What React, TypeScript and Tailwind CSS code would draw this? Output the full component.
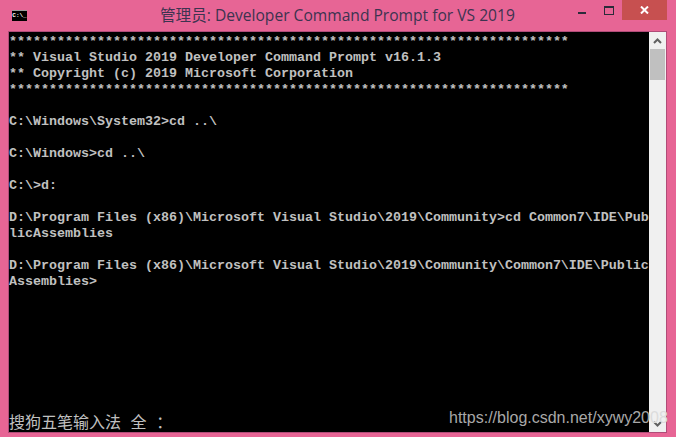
import React from 'react'

const stars = '*'.repeat(70)

const lines = [
  stars,
  '** Visual Studio 2019 Developer Command Prompt v16.1.3',
  '** Copyright (c) 2019 Microsoft Corporation',
  stars,
  '',
  'C:\\Windows\\System32>cd ..\\',
  '',
  'C:\\Windows>cd ..\\',
  '',
  'C:\\>d:',
  '',
  'D:\\Program Files (x86)\\Microsoft Visual Studio\\2019\\Community>cd Common7\\IDE\\Pub',
  'licAssemblies',
  '',
  'D:\\Program Files (x86)\\Microsoft Visual Studio\\2019\\Community\\Common7\\IDE\\Public',
  'Assemblies>',
]

const App = () => {
  return (
    <div className="relative h-[437px] w-[676px] overflow-hidden bg-[#e76595]">
      {/* Title bar */}
      <div className="flex h-[31px] items-start">
        <div className="ml-[12px] mt-[10px] flex h-[11px] w-[15px] items-center justify-center border-t border-[#9a9a9a] bg-black font-['Liberation_Mono',monospace] text-[6px] font-bold leading-none text-white">
          C:\_
        </div>
        <div className="ml-[133px] mt-[5px] w-[355px] font-['Open_Sans','Noto_Sans_CJK_SC',sans-serif] text-[15.6px] leading-[21px] whitespace-nowrap text-[#3d3350]">
          管理员: Developer Command Prompt for VS 2019
        </div>
        <div className="ml-[63px] mt-[12px] h-[2px] w-[8px] bg-[#2b2b3a]" />
        <div className="ml-[18px] mt-[6px] h-[9px] w-[10px] border border-t-2 border-[#2b2b3a]" />
        <div className="ml-[8px] flex h-[20px] w-[45px] items-center justify-center bg-[#c75050]">
          <svg width="9" height="8" viewBox="0 0 9 8">
            <path d="M1 0.5 L8 7.5 M8 0.5 L1 7.5" stroke="#ffffff" strokeWidth="2" fill="none" />
          </svg>
        </div>
      </div>

      {/* Console area */}
      <div className="ml-[8px] flex h-[402px] w-[659px] border border-[#b04c78]">
        <div className="flex h-full w-[640px] flex-col bg-black pt-[2px] font-['Liberation_Mono',monospace] text-[13.33px] font-bold leading-[16px] text-[#c0c0c0]">
          {lines.map((line, i) => (
            <div key={i} className="h-[16px] whitespace-pre">
              {line}
            </div>
          ))}
          <div className="mt-auto h-[16px] whitespace-pre font-['Liberation_Mono','Noto_Sans_CJK_SC',monospace] text-[16px] font-normal leading-[16px]">
            搜狗五笔输入法 全 ：
          </div>
        </div>

        {/* Scrollbar */}
        <div className="flex w-[17px] flex-col items-center bg-[#f0f0f0]">
          <div className="flex h-[17px] items-center justify-center">
            <svg width="9" height="6" viewBox="0 0 9 6">
              <path d="M1 5 L4.5 1.5 L8 5" stroke="#606060" strokeWidth="2" fill="none" />
            </svg>
          </div>
          <div className="h-[31px] w-[15px] bg-[#c0c0c0]" />
          <div className="mt-auto flex h-[17px] items-center justify-center">
            <svg width="9" height="6" viewBox="0 0 9 6">
              <path d="M1 1 L4.5 4.5 L8 1" stroke="#606060" strokeWidth="2" fill="none" />
            </svg>
          </div>
        </div>
      </div>

      {/* Watermark */}
      <div className="absolute left-[449px] top-[408px] font-['Liberation_Sans',sans-serif] text-[16px] leading-[20px] whitespace-nowrap text-[#a8a8a8]">
        https://blog.csdn.net/xywy20<span className="text-[#dcdcdc]">08</span>
      </div>
    </div>
  )
}

export default App
